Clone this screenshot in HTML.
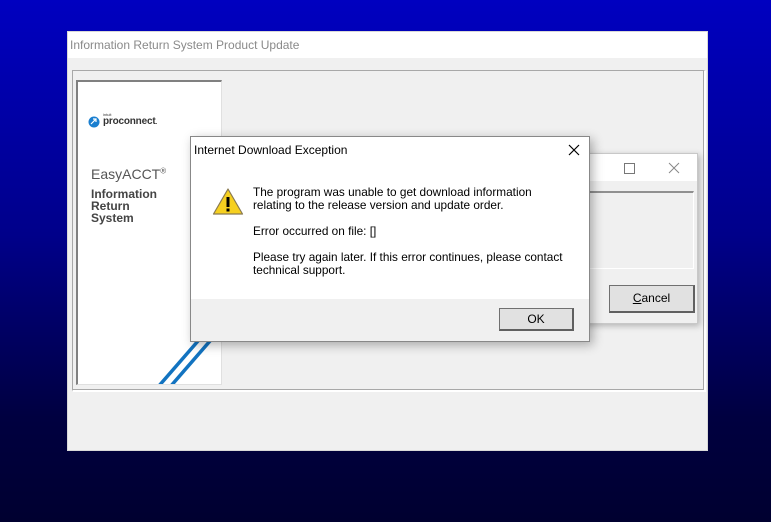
<!DOCTYPE html>
<html><head><meta charset="utf-8"><style>
*{margin:0;padding:0;box-sizing:border-box}
body{width:771px;height:522px;overflow:hidden;background:linear-gradient(#0000c0 0%,#00008a 45%,#000040 80%,#000030 100%);font-family:"Liberation Sans",sans-serif;position:relative}
.a{position:absolute}
</style></head><body>
<div class="a" style="left:67px;top:31px;width:641px;height:420px;background:#f0f0f0;border:1px solid #d8d8d8">
  <div class="a" style="left:0;top:0;width:639px;height:26px;background:#fff"></div>
  <div class="a" style="left:2px;top:6px;font-size:12px;color:#8a8a8a">Information Return System Product Update</div>
  <div class="a" style="left:4px;top:38px;width:633px;height:321px;border:1px solid #a8a8a8;border-right-color:#fff;border-bottom-color:#fff;box-shadow:inset -1px -1px 0 #a8a8a8,1px 1px 0 #fff"></div>
  <div class="a" style="left:8px;top:48px;width:146px;height:305px;background:#fff;border-left:2px solid #808080;border-top:2px solid #808080;border-right:1px solid #e0e0e0;border-bottom:1px solid #e0e0e0;overflow:hidden">
    <svg class="a" style="left:0;top:0" width="146" height="305">
      <circle cx="16" cy="40" r="5.5" fill="#1a7fd0"/>
      <path d="M13 42 L18 37 M15 37 H18 V40" stroke="#fff" stroke-width="1.2" fill="none"/>
      <line x1="80" y1="305" x2="140" y2="236" stroke="#1273c0" stroke-width="3.5"/>
      <line x1="92" y1="305" x2="152" y2="236" stroke="#1273c0" stroke-width="3.5"/>
    </svg>
    <div class="a" style="left:25px;top:30px;font-size:4px;color:#333">intuit</div>
    <div class="a" style="left:25px;top:34px;font-size:10px;font-weight:bold;color:#333;letter-spacing:-0.2px">proconnect<span style="font-size:6px">.</span></div>
    <div class="a" style="left:13px;top:84px;font-size:14px;color:#555">EasyACCT<sup style="font-size:8px">®</sup></div>
    <div class="a" style="left:13px;top:106px;font-size:12px;font-weight:bold;color:#444;line-height:12px">Information<br>Return<br>System</div>
  </div>
</div>
<div class="a" style="left:560px;top:153px;width:138px;height:171px;background:#f0f0f0;border:1px solid #c8c8c8;box-shadow:2px 2px 6px rgba(0,0,0,.25)">
  <div class="a" style="left:0;top:0;width:136px;height:27px;background:#fff"></div>
  <div class="a" style="left:63px;top:9px;width:11px;height:11px;border:1px solid #777"></div>
  <svg class="a" style="left:107px;top:8px" width="12" height="12"><path d="M1 1L11 11M11 1L1 11" stroke="#888" stroke-width="1"/></svg>
  <div class="a" style="left:20px;top:37px;width:113px;height:78px;border-top:2px solid #909090;border-right:1px solid #fff;border-bottom:1px solid #fff"></div>
  <div class="a" style="left:48px;top:131px;width:86px;height:28px;background:#e1e1e1;border:1px solid #707070;border-right:2px solid #606060;border-bottom:2px solid #606060;font-size:12px;text-align:center;line-height:25px;color:#000"><u>C</u>ancel</div>
</div>
<div class="a" style="left:190px;top:136px;width:400px;height:206px;background:#f0f0f0;border:1px solid #888;box-shadow:3px 3px 10px rgba(0,0,0,.3)">
  <div class="a" style="left:0;top:0;width:398px;height:162px;background:#fff"></div>
  <div class="a" style="left:3px;top:6px;font-size:12px;color:#000">Internet Download Exception</div>
  <svg class="a" style="left:377px;top:7px" width="12" height="12"><path d="M1 1L11 11M11 1L1 11" stroke="#000" stroke-width="1.2"/></svg>
  <svg class="a" style="left:21px;top:50px" width="32" height="29">
    <path d="M16 2 L30.5 27 H1.5 Z" fill="#f6d020" stroke="#8a7a50" stroke-width="1.2" stroke-linejoin="round"/>
    <rect x="14.5" y="10" width="3" height="10" fill="#000"/>
    <rect x="14.5" y="21.5" width="3" height="3" fill="#000"/>
  </svg>
  <div class="a" style="left:62px;top:49px;font-size:11.8px;line-height:13px;color:#000;white-space:nowrap">The program was unable to get download information<br>relating to the release version and update order.<br><br>Error occurred on file: []<br><br>Please try again later. If this error continues, please contact<br>technical support.</div>
  <div class="a" style="left:308px;top:171px;width:75px;height:23px;background:#e1e1e1;border:1px solid #707070;border-right:2px solid #606060;border-bottom:2px solid #606060;font-size:12px;text-align:center;line-height:20px;color:#000">OK</div>
</div>
</body></html>
